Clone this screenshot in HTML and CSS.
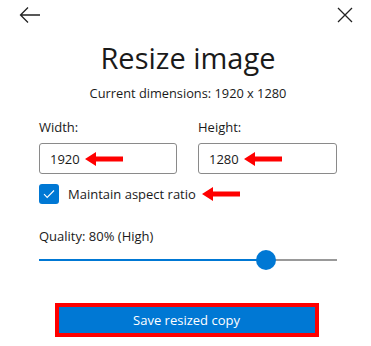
FILE: index.html
```html
<!DOCTYPE html>
<html lang="en">

<head>
    <meta charset="utf-8">
    <meta name="viewport" content="width=device-width, initial-scale=1.0">
    <title>Resize image</title>
    <link rel="stylesheet" href="styles.css">
</head>

<body>
    <header class="topbar">
        <button class="ikon" aria-label="Back">
            <svg width="22" height="18" viewBox="0 0 22 18">
                <path d="M21 9H2M9 1.5L1.5 9L9 16.5" fill="none" stroke="#222" stroke-width="1.3" />
            </svg>
        </button>
        <button class="ikon" aria-label="Close">
            <svg width="16" height="16" viewBox="0 0 16 16">
                <path d="M1 1L15 15M15 1L1 15" fill="none" stroke="#222" stroke-width="1.3" />
            </svg>
        </button>
    </header>

    <main class="indhold">
        <h1>Resize image</h1>
        <p class="dims">Current dimensions: 1920 x 1280</p>

        <div class="felter">
            <div class="felt">
                <label>Width:</label>
                <div class="boks">
                    <span>1920</span>
                    <svg class="pil" width="38" height="14" viewBox="0 0 38 14">
                        <path d="M0 7L11 0V4.5H38V9.5H11V14Z" fill="#ff0000" />
                    </svg>
                </div>
            </div>
            <div class="felt">
                <label>Height:</label>
                <div class="boks">
                    <span>1280</span>
                    <svg class="pil" width="38" height="14" viewBox="0 0 38 14">
                        <path d="M0 7L11 0V4.5H38V9.5H11V14Z" fill="#ff0000" />
                    </svg>
                </div>
            </div>
        </div>

        <div class="tjek">
            <span class="boksen">
                <svg width="12" height="10" viewBox="0 0 12 10">
                    <path d="M1 5.2L4.2 8.4L11 1.5" fill="none" stroke="#fff" stroke-width="1.1" />
                </svg>
            </span>
            <span>Maintain aspect ratio</span>
            <svg class="pil" width="38" height="14" viewBox="0 0 38 14">
                <path d="M0 7L11 0V4.5H38V9.5H11V14Z" fill="#ff0000" />
            </svg>
        </div>

        <p class="kvalitet">Quality: 80% (High)</p>
        <div class="slider">
            <div class="fyld"></div>
            <div class="knop"></div>
        </div>

        <div class="gem">
            <button class="gemknap">Save resized copy</button>
        </div>
    </main>
</body>

</html>
```

FILE: styles.css
```css
* {
    margin: 0;
    padding: 0;
    box-sizing: border-box;
}

body {
    font-family: 'Open Sans', sans-serif;
    color: #1a1a1a;
    background: #fff;
    width: 371px;
    height: 346px;
    overflow: hidden;
}

/* Top bar */
.topbar {
    height: 30px;
    display: flex;
    justify-content: space-between;
    align-items: center;
    padding: 0 18px 0 19px;
}

.ikon {
    background: none;
    border: none;
    display: flex;
}

.indhold {
    padding: 0 34px 0 39px;
}

h1 {
    font-weight: 400;
    font-size: 29px;
    line-height: 36px;
    text-align: center;
    margin-top: 10px;
}

.dims {
    font-size: 12.8px;
    text-align: center;
    margin-top: 8px;
}

/* Inputs */
.felter {
    display: grid;
    grid-template-columns: 138px 139px;
    gap: 21px;
    margin-top: 16px;
}

.felt label {
    display: block;
    font-size: 13px;
    line-height: 18px;
}

.boks {
    margin-top: 7px;
    height: 31px;
    border: 1px solid #8a8a8a;
    border-radius: 3px;
    display: flex;
    align-items: center;
    gap: 5px;
    padding-left: 10px;
    font-size: 13px;
}

/* Checkbox */
.tjek {
    display: flex;
    align-items: center;
    margin-top: 10px;
    font-size: 13px;
}

.boksen {
    width: 20px;
    height: 20px;
    border-radius: 3px;
    background: #0078d4;
    display: flex;
    align-items: center;
    justify-content: center;
    margin-right: 9px;
}

.tjek .pil {
    margin-left: 6px;
}

/* Quality */
.kvalitet {
    font-size: 13px;
    margin-top: 23px;
}

.slider {
    position: relative;
    height: 2px;
    background: #999;
    margin-top: 14px;
}

.fyld {
    width: 227px;
    height: 2px;
    background: #0078d4;
}

.knop {
    position: absolute;
    left: 217px;
    top: -9px;
    width: 20px;
    height: 20px;
    border-radius: 50%;
    background: #0078d4;
}

/* Save knap */
.gem {
    display: flex;
    justify-content: center;
    margin-top: 42px;
    padding-right: 3px;
}

.gemknap {
    width: 264px;
    height: 34px;
    border: 4px solid #ff0000;
    background: #0078d4;
    color: #fff;
    font-family: 'Open Sans', sans-serif;
    font-size: 13px;
}
```
